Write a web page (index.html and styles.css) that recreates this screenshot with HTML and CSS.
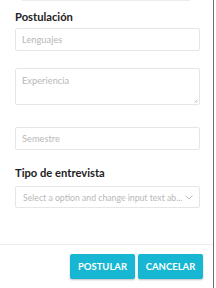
FILE: index.html
```html
<!DOCTYPE html>
<html>
<head>
<meta charset="utf-8">
<link rel="stylesheet" href="styles.css">
</head>
<body>
<div class="panel">
  <div class="top-edge"></div>
  <div class="form">
    <h2 class="title">Postulación</h2>
    <input class="field" type="text" placeholder="Lenguajes">
    <div class="area-wrap">
      <textarea class="field area" placeholder="Experiencia"></textarea>
      <svg class="grip" width="4" height="4" viewBox="0 0 4 4"><path d="M3.5 0.5 L0.5 3.5 M3.5 2 L2 3.5" stroke="#bdbdbd" stroke-width="0.8"/></svg>
    </div>
    <input class="field" type="text" placeholder="Semestre">
    <h2 class="title title-2">Tipo de entrevista</h2>
    <div class="select">
      <span class="select-text">Select a option and change input text ab...</span>
      <svg class="chev" width="8" height="5" viewBox="0 0 8 5"><path d="M0.5 0.5 L4 4 L7.5 0.5" fill="none" stroke="#b5b5b5" stroke-width="0.9"/></svg>
    </div>
  </div>
  <div class="footer">
    <button class="btn">POSTULAR</button>
    <button class="btn">CANCELAR</button>
  </div>
</div>
</body>
</html>
```
FILE: styles.css
```css
html, body {
  margin: 0;
  padding: 0;
  background: #fff;
}
body {
  width: 216px;
  height: 288px;
  overflow: hidden;
  font-family: "Lato", "Open Sans", sans-serif;
}
.panel {
  width: 213px;
  height: 288px;
  border-right: 1px solid #6b6b6b;
  display: flex;
  flex-direction: column;
}
.top-edge {
  margin: -1px 23px 0 22px;
  height: 1px;
  border-bottom: 1px solid #ececec;
}
.form {
  padding: 0 13px 0 15px;
  display: flex;
  flex-direction: column;
}
.title {
  margin: 8px 0 0;
  font-size: 11.2px;
  font-weight: 700;
  color: #222;
  line-height: 15px;
}
.title-2 {
  margin-top: 15px;
}
.field {
  display: block;
  box-sizing: border-box;
  width: 185px;
  height: 23px;
  margin-top: 4px;
  border: 1px solid #e6e6e6;
  border-radius: 2px;
  padding: 0 6px;
  font-family: "Lato", "Open Sans", sans-serif;
  font-size: 9.3px;
  color: #333;
  outline: none;
}
.field::placeholder {
  color: #b8b8b8;
}
.area-wrap {
  position: relative;
  margin-top: 17px;
  margin-bottom: 18px;
}
.area {
  height: 37px;
  margin-top: 0;
  padding: 6px 6px;
  resize: none;
}
.grip {
  position: absolute;
  right: 2px;
  bottom: 2px;
}
.select {
  box-sizing: border-box;
  width: 185px;
  height: 22px;
  margin-top: 6px;
  border: 1px solid #e6e6e6;
  border-radius: 2px;
  padding: 0 6px 0 7px;
  display: flex;
  align-items: center;
  justify-content: space-between;
}
.select-text {
  font-size: 8.7px;
  color: #b8b8b8;
  white-space: nowrap;
}
.chev {
  flex: none;
}
.footer {
  margin-top: 36px;
  border-top: 1px solid #ececec;
  display: flex;
  justify-content: flex-end;
  gap: 3px;
  padding: 9px 10px 0 0;
}
.btn {
  width: 65px;
  height: 25px;
  border: none;
  border-radius: 2px;
  background: #17b7d3;
  color: #fff;
  font-family: "Lato", "Open Sans", sans-serif;
  font-weight: 700;
  font-size: 9.5px;
  padding: 0;
  box-shadow: 0 1px 2px rgba(0,0,0,0.25);
}
```
